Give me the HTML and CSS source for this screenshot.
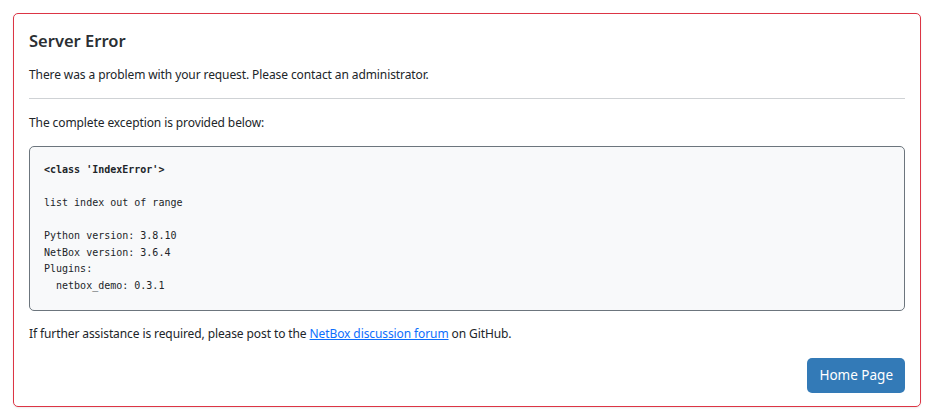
FILE: index.html
```html
<!DOCTYPE html>
<html>
<head>
<meta charset="utf-8">
<link rel="stylesheet" href="styles.css">
</head>
<body>
<div class="page">
  <div class="card">
    <h1 class="title">Server Error</h1>
    <p class="lead">There was a problem with your request. Please contact an administrator.</p>
    <hr class="rule">
    <p class="intro">The complete exception is provided below:</p>
    <pre class="trace"><strong>&lt;class 'IndexError'&gt;</strong>

list index out of range

Python version: 3.8.10
NetBox version: 3.6.4
Plugins:
  netbox_demo: 0.3.1</pre>
    <p class="help">If further assistance is required, please post to the <a href="#" class="link">NetBox discussion forum</a> on GitHub.</p>
    <div class="actions">
      <a href="#" class="btn">Home Page</a>
    </div>
  </div>
</div>
</body>
</html>
```

FILE: styles.css
```css
html, body {
  margin: 0;
  padding: 0;
  background: #fff;
}
body {
  font-family: "Noto Sans", "Open Sans", sans-serif;
  font-size: 12px;
  letter-spacing: -0.1px;
  color: #212529;
}
.page {
  padding: 13px 7px 9px 13px;
}
.card {
  border: 1px solid #dc3545;
  border-radius: 5px;
  padding: 15px 15px 13px 15px;
  box-shadow: 0 1px 2px rgba(0,0,0,0.08);
}
.title {
  margin: 0;
  font-size: 16.5px;
  font-weight: 600;
  line-height: 24px;
  color: #2b2f33;
  letter-spacing: 0;
}
.lead {
  margin: 12px 0 0 0;
  line-height: 20px;
}
.rule {
  border: 0;
  border-top: 1px solid #cfd2d5;
  margin: 13px 0 0 0;
}
.intro {
  margin: 14px 0 0 0;
  line-height: 20px;
}
.trace {
  margin: 13px 0 0 0;
  background: #f8f9fa;
  border: 1px solid #6c757d;
  border-radius: 5px;
  padding: 15px 14px 16px 14px;
  font-family: "DejaVu Sans Mono", "Liberation Mono", monospace;
  font-size: 10px;
  letter-spacing: 0;
  line-height: 16.5px;
  color: #212529;
}
.trace strong {
  font-weight: 600;
}
.help {
  margin: 13px 0 0 0;
  line-height: 20px;
}
.link {
  color: #0d6efd;
  text-decoration: underline;
}
.actions {
  display: flex;
  justify-content: flex-end;
  margin-top: 14px;
}
.btn {
  display: inline-block;
  background: #337ab7;
  color: #fff;
  text-decoration: none;
  font-size: 13.5px;
  letter-spacing: 0;
  line-height: 21px;
  padding: 7px 12px;
  border-radius: 5px;
}
```
